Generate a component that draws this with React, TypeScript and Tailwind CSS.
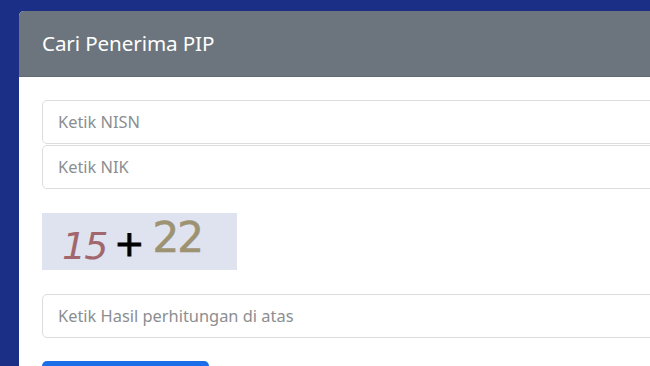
import React from "react";

export default function App() {
  return (
    <div className="w-[650px] h-[366px] overflow-hidden bg-[#1b2f86] pt-[11px] pl-[19px]" style={{ fontFamily: '"Noto Sans", sans-serif' }}>
      <div className="w-[700px] h-[400px] bg-white rounded-tl-[5px] overflow-hidden">
        <div className="h-[66px] bg-[#6c757d] pl-[23px] flex items-center border-b border-[#62696f]">
          <span className="text-white text-[20.6px] leading-none tracking-[-0.1px]">Cari Penerima PIP</span>
        </div>
        <div className="pl-[23px] pt-[23px] flex flex-col">
          <div className="h-[44px] w-[680px] border border-[#dcdcdc] rounded-[5px] flex items-center pl-[15px] text-[16.4px] text-[#8b8e91]">Ketik NISN</div>
          <div className="h-[44px] w-[680px] mt-[1px] border border-[#dcdcdc] rounded-[5px] flex items-center pl-[15px] text-[16.4px] text-[#8b8e91]">Ketik NIK</div>
          <div className="mt-[24px] w-[195px] h-[57px] bg-[#dfe2ef] flex items-center pl-[20px]" style={{ fontFamily: '"DejaVu Sans", sans-serif' }}>
            <span className="italic text-[#a2676d] text-[38px] leading-none mt-[8px] tracking-[-2px]">15</span>
            <span className="text-black text-[36px] leading-none ml-[8px] mr-[8px] mt-[4px] [-webkit-text-stroke:1px_black]">+</span>
            <span className="text-[#9d9271] text-[42px] leading-none -mt-[8px] tracking-[-2px] [-webkit-text-stroke:0.6px_#9d9271]">22</span>
          </div>
          <div className="mt-[24px] h-[44px] w-[680px] border border-[#dcdcdc] rounded-[5px] flex items-center pl-[15px] text-[16.4px] text-[#8b8e91]">Ketik Hasil perhitungan di atas</div>
          <div className="mt-[23px] h-[40px] w-[167px] bg-[#1a6fe8] rounded-[5px]"></div>
        </div>
      </div>
    </div>
  );
}
